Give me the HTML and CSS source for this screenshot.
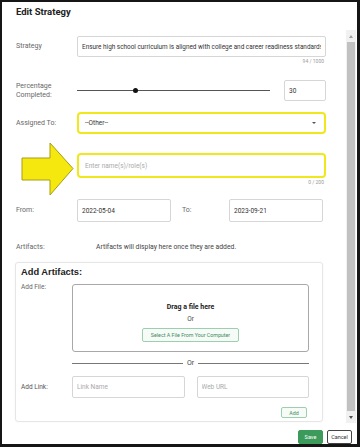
FILE: index.html
```html
<!DOCTYPE html>
<html lang="en">
<head>
  <meta charset="UTF-8">
  <title>Edit Strategy</title>
  <meta name="viewport" content="width=device-width, initial-scale=1">
  <link rel="stylesheet" href="styles.css">
</head>
<body>

<div class="modal">
  <div class="modal-header">Edit Strategy</div>

  <div class="modal-body">
    <div class="content">
      <!-- STRATEGY -->
      <div class="row">
        <label class="label">Strategy</label>
        <div class="field">
          <input class="input input-strategy" type="text" value="Ensure high school curriculum is aligned with college and career readiness standards">
          <div class="counter">94 / 1000</div>
        </div>
      </div>

      <!-- PERCENTAGE -->
      <div class="row row-pct">
        <label class="label label-two">Percentage<br>Completed:</label>
        <input class="slider" type="range" min="0" max="100" value="30">
        <input class="input input-num" type="text" value="30">
      </div>

      <!-- ASSIGNED -->
      <div class="row row-assigned">
        <label class="label">Assigned To:</label>
        <div class="select highlight">
          <span>--Other--</span>
          <span class="caret"></span>
        </div>
      </div>

      <div class="row row-name">
        <span class="label"></span>
        <div class="field">
          <input class="input input-name highlight" type="text" placeholder="Enter name(s)/role(s)">
          <div class="counter">0 / 200</div>
        </div>
      </div>

      <!-- DATES -->
      <div class="row row-dates">
        <label class="label label-date">From:</label>
        <input class="input input-date" type="text" value="2022-05-04">
        <label class="label label-to">To:</label>
        <input class="input input-date" type="text" value="2023-09-21">
      </div>

      <div class="row row-artifacts">
        <label class="label label-art">Artifacts:</label>
        <div class="artifacts-note">Artifacts will display here once they are added.</div>
      </div>

      <!-- ADD ARTIFACTS PANEL -->
      <div class="panel">
        <h3>Add Artifacts:</h3>

        <div class="panel-row row-file">
          <label class="plabel">Add File:</label>
          <div class="dropzone">
            <div class="drop-title">Drag a file here</div>
            <div class="drop-or">Or</div>
            <button class="btn-green btn-select">Select A File From Your Computer</button>
          </div>
        </div>

        <div class="divider"><span>Or</span></div>

        <div class="panel-row row-link">
          <label class="plabel plabel-link">Add Link:</label>
          <div class="link-inputs">
            <input class="input input-link" type="text" placeholder="Link Name">
            <input class="input input-link" type="text" placeholder="Web URL">
          </div>
        </div>

        <div class="add-wrap"><button class="btn-green btn-add">Add</button></div>
      </div>
    </div>

    <div class="scrollbar">
      <div class="sb-btn"><span class="tri-up"></span></div>
      <div class="sb-thumb"></div>
      <div class="sb-btn"><span class="tri-down"></span></div>
    </div>
  </div>

  <div class="modal-footer">
    <button class="btn-save">Save</button>
    <button class="btn-cancel">Cancel</button>
  </div>

  <!-- callout arrow drawn over the form -->
  <svg class="arrow" width="58" height="62" viewBox="0 0 58 62">
    <polygon points="2,18 30,18 30,3 53,28.5 30,55 30,40 2,40" fill="#f4e80f" stroke="#a79d12" stroke-width="1" stroke-linejoin="miter"/>
  </svg>
</div>

</body>
</html>
```

FILE: styles.css
```css
body {
  margin: 0;
  font-family: Roboto, "Liberation Sans", sans-serif;
  background: #fff;
}
.modal {
  position: relative;
  width: 360px;
  height: 447px;
  box-sizing: border-box;
  border: 2px solid #161616;
  border-right-width: 3px;
  border-bottom-width: 3px;
  display: flex;
  flex-direction: column;
  background: #fff;
}
.modal-header {
  height: 28px;
  box-sizing: border-box;
  padding: 2px 14px 0;
  font-size: 9.5px;
  font-weight: 700;
  line-height: 16px;
  color: #222;
}
.modal-body {
  display: flex;
  height: 393px;
}
.content {
  flex: 1;
  padding: 6px 20px 0 14px;
  overflow: hidden;
}

/* rows */
.row {
  display: flex;
  align-items: flex-start;
}
.label {
  width: 61px;
  flex: none;
  font-size: 7px;
  color: #686868;
  line-height: 21px;
}
.field { flex: 1; min-width: 0; }
.input {
  display: block;
  box-sizing: border-box;
  width: 100%;
  height: 21px;
  margin: 0;
  border: 1px solid #d6d6d6;
  border-radius: 2px;
  padding: 0 4px;
  font-family: Roboto, "Liberation Sans", sans-serif;
  font-size: 6.5px;
  color: #333;
  background: #fff;
  outline: none;
}
.input::placeholder { color: #aaa; }
.input-strategy { font-size: 6.4px; }
.counter {
  text-align: right;
  font-size: 5px;
  color: #9a9a9a;
  line-height: 9px;
  padding-right: 2px;
}

.row-pct {
  margin-top: 14px;
  align-items: center;
  height: 21px;
}
.label-two { line-height: 8.5px; }
.slider {
  -webkit-appearance: none;
  appearance: none;
  flex: 1;
  height: 1px;
  margin: 0;
  background: #555;
}
.slider::-webkit-slider-thumb {
  -webkit-appearance: none;
  width: 5px;
  height: 5px;
  border-radius: 50%;
  background: #111;
}
.input-num {
  width: 42px;
  flex: none;
  margin-left: 14px;
}

.row-assigned { margin-top: 11px; }
.row-assigned .label { line-height: 22px; }
.highlight {
  border: 2px solid #f0e81b;
  border-radius: 4px;
}
.select {
  flex: 1;
  height: 22px;
  box-sizing: border-box;
  display: flex;
  align-items: center;
  justify-content: space-between;
  padding: 0 8px 0 6px;
  font-size: 6.5px;
  color: #333;
}
.caret {
  width: 0;
  height: 0;
  border-left: 2px solid transparent;
  border-right: 2px solid transparent;
  border-top: 2.5px solid #555;
}

.row-name { margin-top: 19px; }
.input-name { height: 25px; padding-left: 6px; }

.row-dates { margin-top: 12px; }
.row-dates .label { line-height: 23px; }
.input-date {
  width: 94px;
  height: 23px;
  flex: none;
}
.label-to {
  width: 58px;
  padding-left: 11px;
  box-sizing: border-box;
}

.row-artifacts { margin-top: 20px; }
.label-art { line-height: 10px; }
.artifacts-note {
  padding-left: 19px;
  font-size: 6.8px;
  line-height: 10px;
  color: #444;
}

/* add artifacts panel */
.panel {
  margin: 10px 3px 0 -1px;
  height: 160px;
  box-sizing: border-box;
  border: 1px solid #e6e6e6;
  border-radius: 3px;
  box-shadow: 0 0 2px rgba(0, 0, 0, 0.06);
  padding: 3px 13px 0 5px;
  display: flex;
  flex-direction: column;
}
.panel h3 {
  margin: 0;
  font-family: "Liberation Sans", Arial, sans-serif;
  font-size: 9.3px;
  line-height: 12px;
  color: #222;
}
.panel-row { display: flex; align-items: flex-start; }
.plabel {
  width: 51px;
  flex: none;
  font-size: 6.5px;
  color: #666;
  line-height: 7px;
}
.row-file { margin-top: 6px; }
.dropzone {
  flex: 1;
  height: 68px;
  box-sizing: border-box;
  border: 1px solid #a8a8a8;
  border-radius: 3px;
  display: flex;
  flex-direction: column;
  align-items: center;
  padding-top: 17px;
}
.drop-title {
  font-size: 7px;
  font-weight: 700;
  line-height: 10px;
  color: #222;
}
.drop-or {
  margin-top: 3px;
  font-size: 6.5px;
  line-height: 8px;
  color: #444;
}
.btn-green {
  box-sizing: border-box;
  border: 1px solid #9ccfaf;
  border-radius: 2px;
  background: #f6fbf8;
  color: #3d8c5c;
  font-family: Roboto, "Liberation Sans", sans-serif;
  font-size: 5.3px;
  padding: 0;
  cursor: pointer;
}
.btn-select {
  margin-top: 5px;
  width: 97px;
  height: 14px;
}

.divider {
  margin: 6px 0 0 51px;
  display: flex;
  align-items: center;
  height: 10px;
  font-size: 7px;
  color: #444;
}
.divider::before, .divider::after {
  content: "";
  flex: 1;
  height: 1px;
  background: #777;
}
.divider span { padding: 0 4px; }

.row-link { margin-top: 8px; }
.plabel-link { line-height: 22px; color: #555; }
.link-inputs {
  flex: 1;
  display: flex;
  gap: 12px;
}
.input-link { flex: 1; height: 22px; }

.add-wrap {
  display: flex;
  justify-content: flex-end;
  margin-top: 9px;
  padding-right: 2px;
}
.btn-add {
  width: 26px;
  height: 11px;
}

/* fake scrollbar */
.scrollbar {
  width: 10px;
  margin-right: 1px;
  background: #f1f1f1;
  display: flex;
  flex-direction: column;
}
.sb-btn {
  height: 12px;
  display: flex;
  align-items: center;
  justify-content: center;
}
.sb-thumb {
  flex: 1;
  background: #c1c1c1;
  margin: 0 1px;
}
.tri-up, .tri-down {
  width: 0;
  height: 0;
  border-left: 2.5px solid transparent;
  border-right: 2.5px solid transparent;
}
.tri-up { border-bottom: 3px solid #a0a0a0; }
.tri-down { border-top: 3px solid #505050; }

/* footer */
.modal-footer {
  flex: 1;
  display: flex;
  justify-content: flex-end;
  align-items: flex-start;
  gap: 4px;
  padding: 7px 5px 0 0;
}
.modal-footer button {
  width: 25px;
  height: 14px;
  padding: 0;
  border-radius: 2px;
  font-family: Roboto, "Liberation Sans", sans-serif;
  font-size: 5.5px;
  cursor: pointer;
}
.btn-save {
  background: #3c9a5b;
  border: 1px solid #3c9a5b;
  color: #fff;
}
.btn-cancel {
  background: #fff;
  border: 1px solid #444;
  color: #333;
}

.arrow {
  position: absolute;
  left: 18px;
  top: 138px;
}
```
